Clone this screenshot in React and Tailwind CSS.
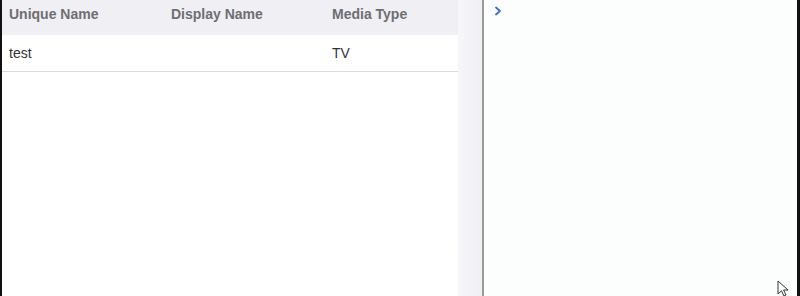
export default function App() {
    return (
        <div className="relative flex h-[296px] w-[800px] overflow-hidden bg-[#111] font-['Liberation_Sans',Arial,sans-serif]">
            <div className="ml-[2px] flex w-[456px] flex-col bg-white">
                <div className="grid h-[35px] grid-cols-[162px_161px_1fr] items-center bg-[#efeff4] pb-[6px] pl-[7px] text-[14px] font-bold text-[#6e6e73]">
                    <span>Unique Name</span>
                    <span>Display Name</span>
                    <span>Media Type</span>
                </div>
                <div className="grid h-[37px] grid-cols-[162px_161px_1fr] items-center border-b border-[#dcdce0] pl-[7px] text-[14px] text-[#333]">
                    <span>test</span>
                    <span></span>
                    <span>TV</span>
                </div>
                <div className="flex-1 bg-white"></div>
            </div>
            <div className="w-[24px] bg-gradient-to-r from-[#f7f7fa] to-[#efeff4]"></div>
            <div className="w-[2px] bg-[#9a9a9a]"></div>
            <div className="relative w-[313px] bg-[#fcfdfd]">
                <svg className="absolute left-[10px] top-[6px]" width="8" height="10" viewBox="0 0 8 10">
                    <path d="M2 1.5 L6 5 L2 8.5" fill="none" stroke="#3a6bd8" strokeWidth="1.8" strokeLinecap="round" strokeLinejoin="round" />
                </svg>
                <svg className="absolute left-[293px] top-[280px]" width="14" height="18" viewBox="0 0 14 18">
                    <path d="M1 1 L1 14 L4.5 10.8 L7 16 L9 15 L6.6 10 L11 10 Z" fill="#fff" stroke="#333" strokeWidth="1" strokeLinejoin="round" />
                </svg>
            </div>
            <div className="flex-1 bg-[#111]"></div>
        </div>
    );
}
